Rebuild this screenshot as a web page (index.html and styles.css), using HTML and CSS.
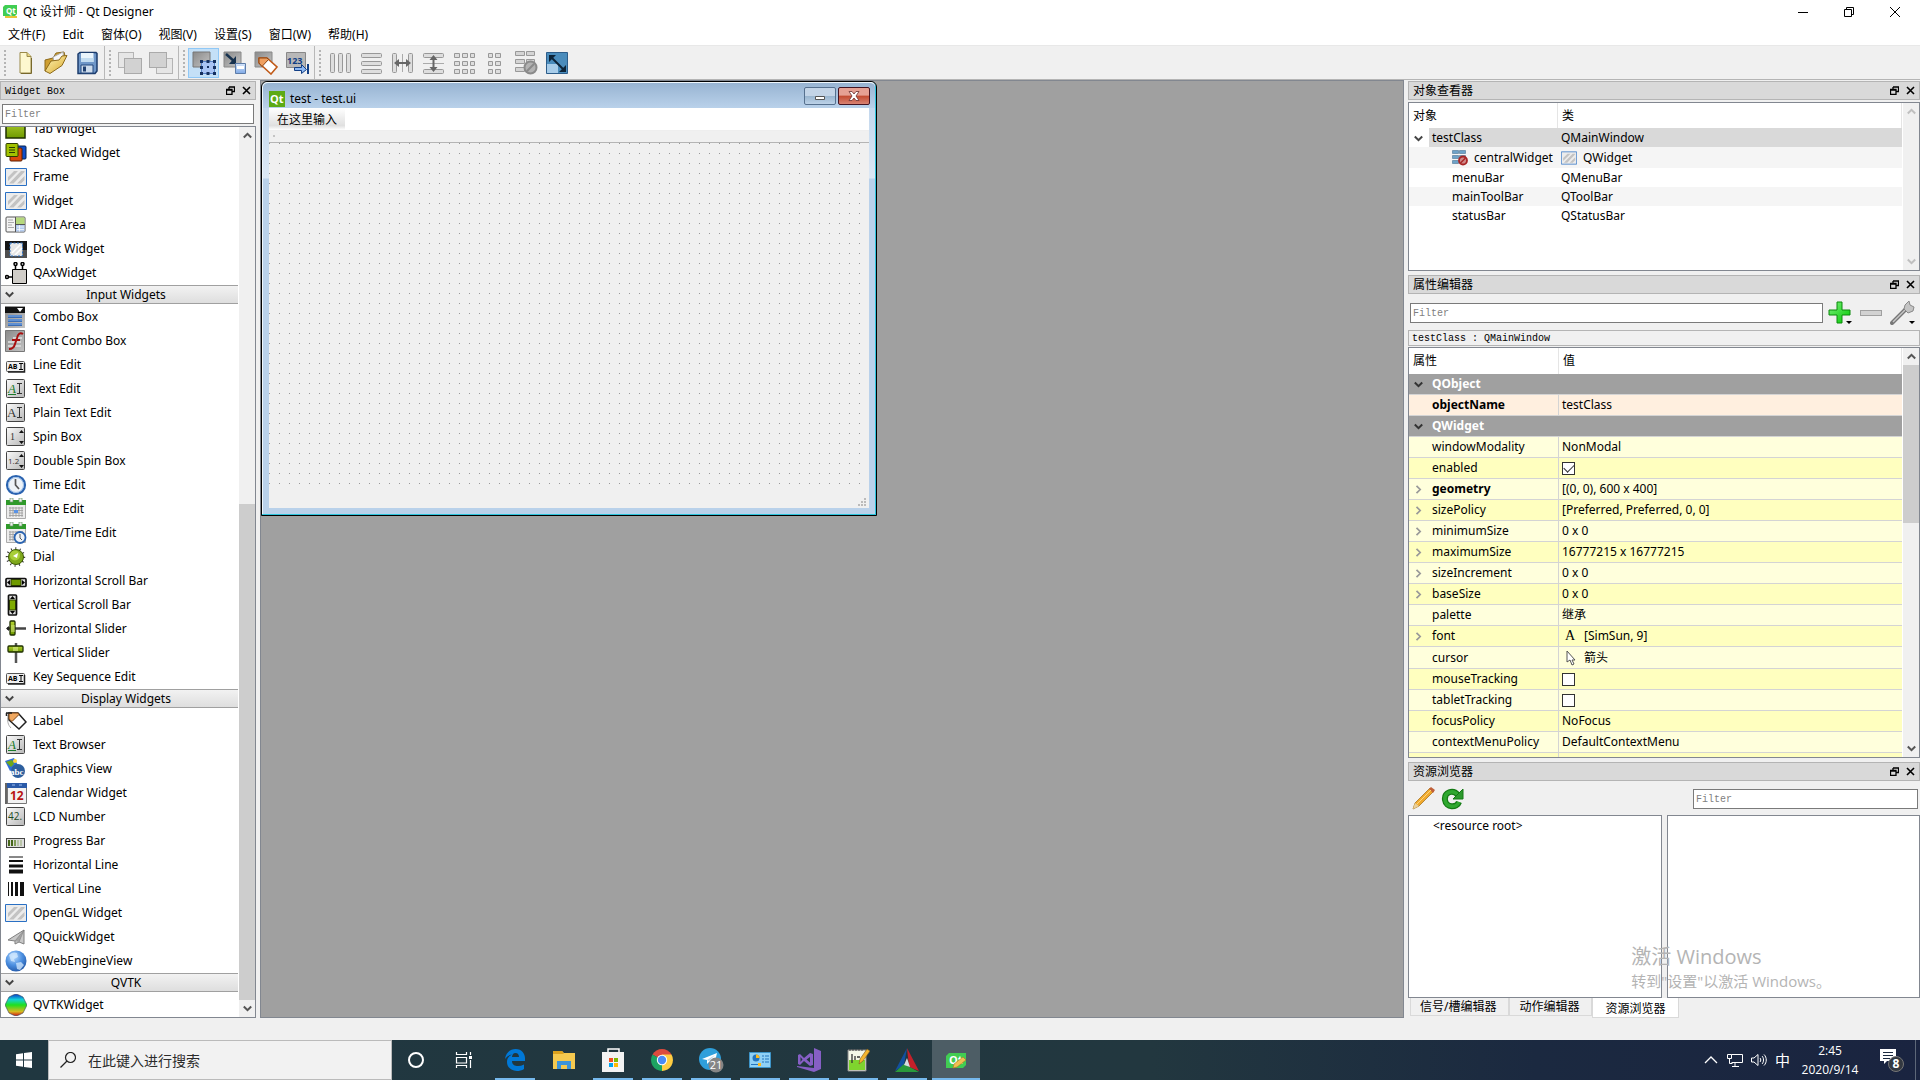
FILE: index.html
```
<!DOCTYPE html>
<html lang="zh-CN">
<head>
    <meta charset="UTF-8">
    <meta name="viewport" content="width=device-width, initial-scale=1.0">
    <title>Qt 设计师 - Qt Designer</title>
    <link rel="stylesheet" href="styles.css">
</head>
<body>

    <!-- Icon sprite -->
    <svg class="sprite" width="0" height="0" aria-hidden="true">
        <defs>
            <linearGradient id="g-grey" x1="0" y1="0" x2="1" y2="1"><stop offset="0" stop-color="#fafafa"/><stop offset="1" stop-color="#b8b8b8"/></linearGradient>
            <linearGradient id="g-dark" x1="0" y1="0" x2="1" y2="1"><stop offset="0" stop-color="#8a8a8a"/><stop offset="1" stop-color="#c4c4c4"/></linearGradient>
            <linearGradient id="g-green" x1="0" y1="0" x2="0" y2="1"><stop offset="0" stop-color="#b5d334"/><stop offset="1" stop-color="#6f9a00"/></linearGradient>
            <linearGradient id="g-blue" x1="0" y1="0" x2="0" y2="1"><stop offset="0" stop-color="#d6e6fb"/><stop offset="1" stop-color="#7fa9e6"/></linearGradient>
            <linearGradient id="g-folder" x1="0" y1="0" x2="1" y2="1"><stop offset="0" stop-color="#fff6b8"/><stop offset="1" stop-color="#d9a82c"/></linearGradient>
            <linearGradient id="g-vtk" x1="0" y1="0" x2="0" y2="1"><stop offset="0" stop-color="#0a35c8"/><stop offset=".25" stop-color="#14d0d8"/><stop offset=".5" stop-color="#1fe01f"/><stop offset=".8" stop-color="#d8b820"/><stop offset="1" stop-color="#d01010"/></linearGradient>
            <radialGradient id="g-globe" cx=".4" cy=".3" r=".8"><stop offset="0" stop-color="#b9dcff"/><stop offset=".5" stop-color="#4c8fe0"/><stop offset="1" stop-color="#1c4f9e"/></radialGradient>
            <linearGradient id="g-plus" x1="0" y1="0" x2="1" y2="1"><stop offset="0" stop-color="#7df07d"/><stop offset="1" stop-color="#00c800"/></linearGradient>
        </defs>

        <symbol id="i-float" viewBox="0 0 9 9"><path d="M3 1h5.500v4.500h-2M3 1v2M3 .8h5.500M.5 3.500h5.500v5h-5.500zM.5 4h5.500" fill="none" stroke="#000" stroke-width="1.300"/></symbol>
        <symbol id="i-x" viewBox="0 0 9 9"><path d="M1 1l7 7M8 1l-7 7" fill="none" stroke="#000" stroke-width="1.600"/></symbol>
        <symbol id="i-down" viewBox="0 0 9 9"><path d="M.8 2.500l3.700 3.700 3.700-3.700" fill="none" stroke="currentColor" stroke-width="2"/></symbol>
        <symbol id="i-up" viewBox="0 0 9 9"><path d="M.8 6.500l3.700-3.700 3.700 3.700" fill="none" stroke="currentColor" stroke-width="2"/></symbol>
        <symbol id="i-right" viewBox="0 0 9 9"><path d="M2.500 .8l3.700 3.700-3.700 3.700" fill="none" stroke="currentColor" stroke-width="1.700"/></symbol>

        <!-- Toolbar icons -->
        <symbol id="i-new" viewBox="0 0 24 24"><path d="M7 1.500h7l4 4v16.500H7z" fill="#fdf8cf" stroke="#9a8a4a"/><path d="M14 1.500v4h4" fill="#e8d680" stroke="#9a8a4a"/><path d="M18.500 7v15.500H8" fill="none" stroke="#77682c"/></symbol>
        <symbol id="i-open" viewBox="0 0 24 24"><path d="M1 20V9l8-2 3-5 8-1 1 4z" fill="#cf9f30" stroke="#8d6a1b"/><path d="M9 6l10-5 1 8-9 7z" fill="#f7f7f7" stroke="#aaa"/><path d="M1 20l6-10 8-1 3-4 5-.5-5 10-12 8z" fill="url(#g-folder)" stroke="#8d6a1b"/></symbol>
        <symbol id="i-save" viewBox="0 0 24 24"><path d="M3 3l2-1.500h16l1 1V20l-2 2.500H3z" fill="#6f97c8" stroke="#1c3c6c" stroke-width="1.500"/><path d="M6 2h12.500v9H6z" fill="#eaf5fc"/><path d="M6 7h12.500v4H6z" fill="#c2dcf0"/><path d="M6 14h12v8H6z" fill="#cddcec" stroke="#24497e"/><path d="M8 15.500h3v5H8z" fill="#204070"/></symbol>
        <symbol id="i-raise" viewBox="0 0 24 24"><rect x=".5" y="1.500" width="15" height="15" fill="#e6e6e6" stroke="#b4b4b4"/><rect x="6.500" y="7.500" width="17" height="15" fill="#d2d2d2" stroke="#aaa"/></symbol>
        <symbol id="i-lower" viewBox="0 0 24 24"><rect x="7.500" y="7.500" width="16" height="15" fill="#e6e6e6" stroke="#b4b4b4"/><rect x=".5" y="1.500" width="17" height="15" fill="#d2d2d2" stroke="#aaa"/></symbol>
        <symbol id="i-edit" viewBox="0 0 24 24"><path d="M1 1h17v15H1z" fill="url(#g-dark)" stroke="#777"/><path d="M9.500 10.500h13v12h-13z" fill="#a9c4f4" stroke="#5b84c8"/><path d="M8 9h3v3H8zM14.500 9h3v3h-3zM21 9h3v3h-3zM8 15h3v3H8zM21 15h3v3h-3zM8 21h3v3H8zM14.500 21h3v3h-3zM21 21h3v3h-3zM15 15h2v2h-2z" fill="#16305f"/></symbol>
        <symbol id="i-signal" viewBox="0 0 24 24"><path d="M1 1h17v15H1z" fill="url(#g-dark)" stroke="#888"/><path d="M3 3l9 8" stroke="#17324f" stroke-width="2.400"/><path d="M13 5v8H6z" fill="#17324f"/><path d="M12.500 12.500h10v10h-10z" fill="url(#g-blue)" stroke="#5d7ca8"/><path d="M14 15h7v3h-7z" fill="#fff"/></symbol>
        <symbol id="i-buddy" viewBox="0 0 24 24"><path d="M1 1h17v15H1z" fill="url(#g-dark)" stroke="#888"/><path d="M5 7l8 0 10 9-6 7L5 12z" fill="#fff" stroke="#c05a18" stroke-width="1.600"/><path d="M5 7h8l1.500 1.500-6.500 7-3-3.500z" fill="#f0a060" stroke="#8c4615"/></symbol>
        <symbol id="i-hlay" viewBox="0 0 24 24"><g fill="#dedede" stroke="#989898"><rect x="2.500" y="2.500" width="4" height="19" rx="1"/><rect x="10.500" y="2.500" width="4" height="19" rx="1"/><rect x="18.500" y="2.500" width="4" height="19" rx="1"/></g></symbol>
        <symbol id="i-vlay" viewBox="0 0 24 24"><g fill="#dedede" stroke="#989898"><rect x="2.500" y="2.500" width="20" height="4" rx="1"/><rect x="2.500" y="10.500" width="20" height="4" rx="1"/><rect x="2.500" y="18.500" width="20" height="4" rx="1"/></g></symbol>
        <symbol id="i-hsplit" viewBox="0 0 24 24"><g fill="#dedede" stroke="#989898"><rect x="2.500" y="2.500" width="4" height="19" rx="1"/><rect x="18.500" y="2.500" width="4" height="19" rx="1"/></g><path d="M12.500 3v18" stroke="#aaa"/><path d="M4 12l5-4v3h7V8l5 4-5 4v-3H9v3z" fill="#666"/></symbol>
        <symbol id="i-vsplit" viewBox="0 0 24 24"><g fill="#dedede" stroke="#989898"><rect x="2.500" y="2.500" width="20" height="4" rx="1"/><rect x="2.500" y="18.500" width="20" height="4" rx="1"/></g><path d="M2 12.500h21" stroke="#aaa"/><path d="M12.500 4l4 5h-3v7h3l-4 5-4-5h3V9h-3z" fill="#666"/></symbol>
        <symbol id="i-grid" viewBox="0 0 24 24"><g fill="#dedede" stroke="#989898"><path d="M2.500 2.500h5v4h-5zM10.500 2.500h5v4h-5zM18.500 2.500h4v4h-4zM2.500 10.500h5v4h-5zM10.500 10.500h5v4h-5zM18.500 10.500h4v4h-4zM2.500 18.500h5v4h-5zM10.500 18.500h5v4h-5zM18.500 18.500h4v4h-4z"/></g></symbol>
        <symbol id="i-form" viewBox="0 0 24 24"><g fill="#dedede" stroke="#989898"><path d="M5.500 2.500h4v4h-4zM12.500 2.500h5v4h-5zM5.500 10.500h4v4h-4zM12.500 10.500h5v4h-5zM5.500 18.500h4v4h-4zM12.500 18.500h5v4h-5z"/></g></symbol>
        <symbol id="i-break" viewBox="0 0 24 24"><g fill="#d4d4d4" stroke="#999"><path d="M1.500 .5h9v4h-9zM12.500 .5h8v4h-8zM1.500 8.500h9v4h-9zM12.500 8.500h8v4h-8zM1.500 16.500h9v4h-9z"/></g><circle cx="16.500" cy="16.500" r="6" fill="#b2b2b2" stroke="#8a8a8a" stroke-width="2"/><path d="M13 20l7-7" stroke="#8a8a8a" stroke-width="2"/></symbol>
        <symbol id="i-adjust" viewBox="0 0 24 24"><path d="M1.500 1.500h21v21h-21z" fill="#4a8cbc" stroke="#2d5d8a"/><path d="M2 13h11v9H2z" fill="#a8cdea"/><path d="M6 6l13 13" stroke="#0d2438" stroke-width="2"/><path d="M4 4h7l-7 7zM21 21h-7l7-7z" fill="#0d2438"/></symbol>

        <!-- Widget icons -->
        <symbol id="w-tab" viewBox="0 0 22 22"><rect x="1" y="1" width="19" height="19" fill="url(#g-green)" stroke="#1f3000" stroke-width="1.500"/></symbol>
        <symbol id="w-stack" viewBox="0 0 22 22"><rect x="9" y="4" width="12" height="13" rx="1" fill="#0d4ecb" stroke="#04204e"/><rect x="5" y="6" width="12" height="13" rx="1" fill="#d94a0d" stroke="#5a1c00"/><rect x="1" y="1.500" width="12" height="13" rx="1" fill="#a2c200" stroke="#2c3c00"/><path d="M4 5.500h6M4 8h6M4 10.500h6" stroke="#2c3c00"/></symbol>
        <symbol id="w-stripe" viewBox="0 0 22 22"><path d="M.5 2.500h21v17H.5z" fill="#ececec" stroke="#2a70c4"/><path d="M3 11l6-6h4L3 15zM4 17.500L16 5h3.500v1L8.500 17.500zM12 17.500l7.500-7.500v4l-3.500 3.500z" fill="#c3c3c3"/></symbol>
        <symbol id="w-mdi" viewBox="0 0 22 22"><rect x="1" y="3" width="19" height="15" rx="1" fill="#f4f4f4" stroke="#555"/><path d="M11 3.500h8.500V10H11z" fill="#b6d97d"/><path d="M11 11h8.500v6.500H11z" fill="#b4ccf0"/><path d="M3 6h5M3 8.500h6M3 11h4M3 13.500h6" stroke="#aaa"/><path d="M12 13h7M12 15.500h7M14.500 11v6.500" stroke="#fff" stroke-width=".7"/><path d="M10.500 3v15M10.500 10.500H20" stroke="#555"/></symbol>
        <symbol id="w-dock" viewBox="0 0 22 22"><path d="M0 3h22v17H0z" fill="#151515"/><path d="M0 12h22v8H0z" fill="#777" opacity=".6"/><path d="M5 5h12.500v13H5z" fill="#e6e6e6" stroke="#2a70c4" stroke-dasharray="2 1.500"/><path d="M7 15l8-8M10 17l7-7" stroke="#fff" stroke-width="1.500"/></symbol>
        <symbol id="w-qax" viewBox="0 0 22 22"><g fill="none" stroke="#000" stroke-width="1.500"><circle cx="10.500" cy="2" r="1.500"/><circle cx="17.500" cy="2" r="1.500"/><circle cx="2" cy="15" r="1.500"/><path d="M10.500 4v4M17.500 4v4M4 15h4"/></g><path d="M7.500 7.500h14v14h-14z" fill="#d0cdc8" stroke="#000"/></symbol>
        <symbol id="w-combo" viewBox="0 0 22 22"><path d="M0 0h20v22H0z" fill="url(#g-dark)"/><path d="M0 1h20v6H0z" fill="#111"/><path d="M12 2h6l-3 4z" fill="#fff"/><path d="M3 10.500h14M3 14.500h14M3 18.500h14" stroke="#3a6cb4" stroke-width="3"/><path d="M3 10h14M3 14h14M3 18h14" stroke="#86b4f0"/></symbol>
        <symbol id="w-fontcombo" viewBox="0 0 22 22"><path d="M.5 .5h19v21H.5z" fill="url(#g-dark)" stroke="#777"/><path d="M8 8h9M3 12h13M3 16h13" stroke="#d4d4d4" stroke-width="2"/><path d="M18 4c-3-2-5 0-6 4l-2 6c-1 4-3 5-6 5M7 10h8" fill="none" stroke="#a80f0f" stroke-width="2"/></symbol>
        <symbol id="w-time" viewBox="0 0 22 22"><circle cx="11" cy="11" r="9" fill="#eef3f8" stroke="#2a63b0" stroke-width="2.200"/><circle cx="11" cy="11" r="7.500" fill="none" stroke="#9dbfe8"/><path d="M10.500 5v6l3.500 4" fill="none" stroke="#555" stroke-width="1.700"/></symbol>
        <symbol id="w-date" viewBox="0 0 22 22"><path d="M1.500 3.500h19v17h-19z" fill="#ececec" stroke="#aaa"/><path d="M1 2h20v5H1z" fill="#2f9a2a"/><path d="M4 10h14M4 12.500h14M4 15h14M4 17.500h14M5 9v10M8 9v10M11 9v10M14 9v10M17 9v10" stroke="#9a9a9a" stroke-width=".8"/><path d="M9 12h4v3H9z" fill="#5a93e6"/><path d="M5 0h3v4H5zM14 0h3v4h-3z" fill="#eee" stroke="#6a9a6a" stroke-width=".7"/></symbol>
        <symbol id="w-datetime" viewBox="0 0 22 22"><use href="#w-date"/><circle cx="15" cy="15.500" r="5.500" fill="#eef3f8" stroke="#2a63b0" stroke-width="1.800"/><path d="M15 12v4l2 2" fill="none" stroke="#555"/></symbol>
        <symbol id="w-dial" viewBox="0 0 22 22"><circle cx="10.500" cy="11" r="8.500" fill="none" stroke="#333" stroke-width="2.400" stroke-dasharray="1 3.400"/><circle cx="11" cy="11" r="7.500" fill="#7fa81c" stroke="#3c5a00"/><circle cx="10" cy="9.500" r="5" fill="#a8ce38"/><path d="M8 10l5-3-1 5z" fill="#fff"/></symbol>
        <symbol id="w-hscroll" viewBox="0 0 22 22"><rect x="1" y="8.500" width="20" height="8" rx="1" fill="#ddd" stroke="#111" stroke-width="1.700"/><path d="M6 9.500h10v6H6z" fill="#6f9a00" stroke="#2c3c00"/><path d="M5 10v5l-3-2.500zM17 10v5l3-2.500z" fill="#000"/></symbol>
        <symbol id="w-vscroll" viewBox="0 0 22 22"><rect x="3.500" y="1" width="8" height="20" rx="1" fill="#ddd" stroke="#111" stroke-width="1.700"/><path d="M4.500 6h6v10h-6z" fill="#7fac00" stroke="#2c3c00"/><path d="M5 5h5L7.500 2zM5 17h5l-2.500 3z" fill="#000"/></symbol>
        <symbol id="w-hslider" viewBox="0 0 22 22"><path d="M2 10.500h19" stroke="#444" stroke-width="2.500"/><rect x="5" y="3" width="5" height="14" rx="1" fill="url(#g-green)" stroke="#1f3000" stroke-width="1.300"/><path d="M7 7v7M9 7v7" stroke="#e6f4a0" stroke-width=".8"/><path d="M4 8v5l-3-2.500z" fill="#222"/></symbol>
        <symbol id="w-vslider" viewBox="0 0 22 22"><path d="M11 1v20" stroke="#555" stroke-width="2.500"/><rect x="3" y="4" width="15" height="6" rx="1" fill="url(#g-green)" stroke="#1f3000" stroke-width="1.300"/><path d="M8 6h5M8 8h5" stroke="#e6f4a0"/></symbol>
        <symbol id="w-label" viewBox="0 0 22 22"><path d="M1 5c3-4 6-3 6 0M3 5c-1 6 0 10 3 13" fill="none" stroke="#aaa"/><path d="M4 3h9l8 9-7 7L4 10z" fill="#fff" stroke="#222" stroke-width="1.500"/><path d="M4 3h9l1 1.500-7 7L4 9z" fill="#f0a860" stroke="#7a4010"/><path d="M1 3h6M1.500 3v3" stroke="#222" stroke-width="1.500"/></symbol>
        <symbol id="w-progress" viewBox="0 0 22 22"><rect x="1.500" y="8.500" width="18" height="9" fill="#ddd" stroke="#444"/><path d="M3 10h2v6H3zM6 10h2v6H6z" fill="#46661a"/><path d="M9 10h2v6H9z" fill="#7f9a58"/><path d="M12 10h2v6h-2zM15 10h2v6h-2z" fill="#b9c4a8"/></symbol>
        <symbol id="w-hline" viewBox="0 0 22 22"><path d="M4 3h14" stroke="#111" stroke-width="1"/><path d="M4 7h14" stroke="#111" stroke-width="2"/><path d="M4 12h14" stroke="#111" stroke-width="3"/><path d="M4 17.500h14" stroke="#111" stroke-width="4"/></symbol>
        <symbol id="w-vline" viewBox="0 0 22 22"><path d="M3.500 4v14" stroke="#111"/><path d="M7 4v14" stroke="#111" stroke-width="2"/><path d="M11.500 4v14" stroke="#111" stroke-width="3"/><path d="M17 4v14" stroke="#111" stroke-width="4"/></symbol>
        <symbol id="w-quick" viewBox="0 0 22 22"><path d="M3 14L19 4v14l-5-2-4 2 0-3z" fill="#c8c8c8" stroke="#808080"/><path d="M10 15l9-11-5 12" fill="#a4a4a4" stroke="#777" stroke-width=".5"/></symbol>
        <symbol id="w-web" viewBox="0 0 22 22"><circle cx="11" cy="11" r="10.500" fill="url(#g-globe)"/><path d="M4 5c3-3 6-3 8-2l1 4-4 2 1 3-4-1zM11 13l5-1 3 3-4 5-3-1z" fill="#d6ebff" opacity=".75"/></symbol>
        <symbol id="w-vtk" viewBox="0 0 22 22"><path d="M8 1l3-1 3 1 4 2 2 4 2 4-2 4-2 4-4 2-3 1-3-1-4-2-2-4-2-4 2-4 2-4z" fill="url(#g-vtk)" stroke="#345" stroke-width=".6"/></symbol>

        <symbol id="i-nolayout" viewBox="0 0 16 16"><path d="M.5 .5h6v3h-6zM7.500 .5h6v3h-6zM.5 5.500h6v3h-6zM7.500 5.500h6v3h-6zM.5 10.500h6v3h-6z" fill="#6ea2c8" stroke="#4a7494" stroke-width=".6"/><circle cx="11" cy="10.500" r="4" fill="#d08a8a" stroke="#a82626" stroke-width="1.800"/><path d="M8.500 13l5-5" stroke="#a82626" stroke-width="1.500"/></symbol>
        <symbol id="i-plus" viewBox="0 0 26 24"><path d="M9 1h5v8h8v5h-8v8H9v-8H1V9h8z" fill="url(#g-plus)" stroke="#0b8a0b"/><path d="M18 20h6l-3 3z" fill="#000"/></symbol>
        <symbol id="i-minus" viewBox="0 0 26 24"><rect x="1.500" y="9.500" width="21" height="5" fill="#d2d2d2" stroke="#a0a0a0"/></symbol>
        <symbol id="i-wrench" viewBox="0 0 26 24"><path d="M2 22L16 8" stroke="#777" stroke-width="4" stroke-linecap="round"/><path d="M3 21L15 9" stroke="#c8c8c8" stroke-width="1.500"/><path d="M14 8l1-4 4-4 1 4 4 2-1 4-5 2z" fill="#c4c4c4" stroke="#888"/><path d="M19 20h6l-3 3z" fill="#000"/></symbol>
        <symbol id="i-pencil" viewBox="0 0 24 24"><path d="M1 22l2-6L18 1l4 3L7 19z" fill="#f0a92c" stroke="#a87320" stroke-width=".8"/><path d="M17 2l2-2 4 3-2 3z" fill="#c0603a"/><path d="M1 22l2-6 4 3z" fill="#e8cf9a"/><path d="M5 17L19 3" stroke="#ffd57a"/></symbol>
        <symbol id="i-reload" viewBox="0 0 24 24"><path d="M18 15c-2 6-13 6-14-2C3 5 12 2 17 8" fill="none" stroke="#147a14" stroke-width="6"/><path d="M18 15c-2 6-13 6-14-2C3 5 12 2 17 8" fill="none" stroke="#2fa82f" stroke-width="3.500"/><path d="M22 2v10H12z" fill="#2c992c" stroke="#147a14"/></symbol>
        <symbol id="i-cursor" viewBox="0 0 16 16"><path d="M5 1v11l3-2 2 5 2-1-2-4h3z" fill="#fff" stroke="#555"/></symbol>

        <!-- Taskbar icons -->
        <symbol id="t-start" viewBox="0 0 16 16"><path d="M0 2.200l7-1v6.300H0zM8 1.100L16 0v7.500H8zM0 8.500h7v6.300l-7-1zM8 8.500h8V16l-8-1.100z" fill="#fff"/></symbol>
        <symbol id="t-search" viewBox="0 0 16 16"><circle cx="10.500" cy="5.500" r="5" fill="none" stroke="#222" stroke-width="1.200"/><path d="M7 9L.5 15.500" stroke="#222" stroke-width="1.300"/></symbol>
        <symbol id="t-cortana" viewBox="0 0 24 24"><circle cx="12" cy="12" r="7" fill="none" stroke="#fff" stroke-width="2"/></symbol>
        <symbol id="t-view" viewBox="0 0 24 24"><path d="M4.500 4v2.500h10V4M4.500 20v-2.500h10V20M4.500 9.500h10v5.500h-10zM18.500 4v3M18.500 12v8" fill="none" stroke="#fff" stroke-width="1.200"/><path d="M17 8h3v3h-3z" fill="#fff"/></symbol>
        <symbol id="t-edge" viewBox="0 0 24 24"><path d="M2 11C3 4 8 1 12.500 1 19 1 22 6 22 10v3H9c0 4 3 5 6 5 2 0 4-.5 6-1.500v4.500c-2 1.500-5 2-7 2-6 0-10-4-10-9 0-4 2-6 5-7.500C6 7 4 8.500 2 11zM9 9h7c0-2-1-4-3.500-4S9.300 7 9 9z" fill="#0078d7"/></symbol>
        <symbol id="t-explorer" viewBox="0 0 24 24"><path d="M1 3h9l2 2h11v16H1z" fill="#f5c94f"/><path d="M1 3h9l2 3H1z" fill="#dca11d"/><path d="M5 21v-8h14v8h-4v-4H9v4z" fill="#3d94d9"/></symbol>
        <symbol id="t-store" viewBox="0 0 24 24"><path d="M7 5V1h11v4" fill="none" stroke="#fff" stroke-width="1.500"/><path d="M1 4h22v20H1z" fill="#f3f3f3"/><path d="M8 10h4v4H8z" fill="#f25022"/><path d="M13 10h4v4h-4z" fill="#7fba00"/><path d="M8 15h4v4H8z" fill="#00a4ef"/><path d="M13 15h4v4h-4z" fill="#ffb900"/></symbol>
        <symbol id="t-chrome" viewBox="0 0 24 24"><path d="M12 12L2.500 6.500a11 11 0 0 1 19 0z" fill="#dd4b3e"/><path d="M12 12L2.500 6.500A11 11 0 0 0 12 23l4.500-8.500z" fill="#1da362"/><path d="M12 12v11a11 11 0 0 0 9.500-16.500H12z" fill="#ffcd42"/><circle cx="12" cy="12" r="5.200" fill="#fff"/><circle cx="12" cy="12" r="4.200" fill="#4c8bf5"/></symbol>
        <symbol id="t-panel" viewBox="0 0 24 24"><path d="M1.500 4.500h21v15h-21z" fill="#8fd0f5" stroke="#3d94c9"/><circle cx="8" cy="10" r="3.500" fill="#2374bd"/><path d="M8 10V6.500A3.500 3.500 0 0 1 11.500 10z" fill="#ffb81a"/><path d="M14 8h2m1 0h4M14 11h2m1 0h4M14 14h2m1 0h4M3 16.500h7" stroke="#2374bd"/><path d="M10 15h3v3h-3z" fill="#ffb81a"/></symbol>
        <symbol id="t-vs" viewBox="0 0 24 24"><path d="M17 0l7 3v18l-7 3-17-5v-1l17 2z" fill="#865fc5"/><path d="M1 7l2-1 4 4 6-5 3 1v11l-3 1-6-5-4 4-2-1zM3.500 9v5l2-2.500zM9.500 11.500l3.500 3V9z" fill="#865fc5" fill-rule="evenodd"/></symbol>
        <symbol id="t-npp" viewBox="0 0 24 24"><path d="M2 2h18v21H2z" fill="#f4f8e8" stroke="#888"/><path d="M3 12h16v10H3z" fill="#7fd42e"/><path d="M4 1v2m3-2v2m3-2v2m3-2v2m3-2v2" stroke="#444"/><path d="M6 6v9M9 8v4M11 9h3" stroke="#333" stroke-width="1.300"/><path d="M13 16l1-5 7-10 3 2-7 10z" fill="#f4b52e" stroke="#7a5a20" stroke-width=".6"/></symbol>
        <symbol id="t-cmake" viewBox="0 0 24 24"><path d="M12 0L0 23l9-6z" fill="#1250a0"/><path d="M12 0l12 23-10-4z" fill="#c4202a"/><path d="M0 24l9-8 15 8z" fill="#2a9a3c"/><path d="M12 10l-3 7 6 2z" fill="#d8dce0"/></symbol>
    </svg>

    <!-- Title bar -->
    <header class="titlebar">
        <svg class="app-icon" viewBox="0 0 14 14"><path d="M2 0h12v9l-2 2H0V2z" fill="#41cd52"/><text x="3" y="9" class="t-ico" font-size="8" font-weight="bold" fill="#fff">Qt</text><path d="M2 11h12v2H2z" fill="#e8c437"/></svg>
        <h1>Qt 设计师 - Qt Designer</h1>
        <div class="window-buttons">
            <button aria-label="最小化"><svg viewBox="0 0 12 12"><path d="M1 6.500h10" stroke="#000"/></svg></button>
            <button aria-label="还原"><svg viewBox="0 0 12 12"><path d="M1.500 3.500h7v7h-7zM3.500 3.500v-2h7v7h-2" fill="none" stroke="#000"/></svg></button>
            <button aria-label="关闭"><svg viewBox="0 0 12 12"><path d="M1 1l10 10M11 1L1 11" stroke="#000"/></svg></button>
        </div>
    </header>

    <nav class="menubar">
        <button>文件(F)</button>
        <button>Edit</button>
        <button>窗体(O)</button>
        <button>视图(V)</button>
        <button>设置(S)</button>
        <button>窗口(W)</button>
        <button>帮助(H)</button>
    </nav>

    <div class="toolbar">
        <div class="tool-group">
            <button aria-label="New"><svg><use href="#i-new"/></svg></button>
            <button aria-label="Open"><svg><use href="#i-open"/></svg></button>
            <button aria-label="Save"><svg><use href="#i-save"/></svg></button>
        </div>
        <div class="tool-group">
            <button aria-label="Raise"><svg><use href="#i-raise"/></svg></button>
            <button aria-label="Lower"><svg><use href="#i-lower"/></svg></button>
        </div>
        <div class="tool-group">
            <button class="active" aria-label="Edit Widgets"><svg><use href="#i-edit"/></svg></button>
            <button aria-label="Edit Signals/Slots"><svg><use href="#i-signal"/></svg></button>
            <button aria-label="Edit Buddies"><svg><use href="#i-buddy"/></svg></button>
            <button aria-label="Edit Tab Order"><svg viewBox="0 0 24 24"><path d="M1.500 1.500h19v15h-19z" fill="#b8b8b8" stroke="#888"/><text x="2" y="13" class="t-ico" font-size="9" font-weight="bold" fill="#123f85">123</text><path d="M9.500 16.500h7v-3l5 5-5 4v-3h-7z" fill="#8db8f3" stroke="#123f85"/><path d="M23 13v10" stroke="#123f85" stroke-width="2"/></svg></button>
        </div>
        <div class="tool-group">
            <button aria-label="Lay Out Horizontally"><svg><use href="#i-hlay"/></svg></button>
            <button aria-label="Lay Out Vertically"><svg><use href="#i-vlay"/></svg></button>
            <button aria-label="Horizontal Splitter"><svg><use href="#i-hsplit"/></svg></button>
            <button aria-label="Vertical Splitter"><svg><use href="#i-vsplit"/></svg></button>
            <button aria-label="Grid"><svg><use href="#i-grid"/></svg></button>
            <button aria-label="Form Layout"><svg><use href="#i-form"/></svg></button>
            <button aria-label="Break Layout"><svg><use href="#i-break"/></svg></button>
            <button aria-label="Adjust Size"><svg><use href="#i-adjust"/></svg></button>
        </div>
    </div>

    <main class="workspace">

        <!-- Widget Box -->
        <aside class="widget-box">
            <div class="dock-title">
                <h2 class="mono">Widget Box</h2>
                <button aria-label="Float"><svg><use href="#i-float"/></svg></button>
                <button aria-label="Close"><svg><use href="#i-x"/></svg></button>
            </div>
            <input class="filter" type="text" placeholder="Filter" aria-label="Filter widgets">
            <div class="widget-frame">
                <div class="widget-list">
                    <ul>
                        <li><svg><use href="#w-tab"/></svg>Tab Widget</li>
                        <li><svg><use href="#w-stack"/></svg>Stacked Widget</li>
                        <li><svg><use href="#w-stripe"/></svg>Frame</li>
                        <li><svg><use href="#w-stripe"/></svg>Widget</li>
                        <li><svg><use href="#w-mdi"/></svg>MDI Area</li>
                        <li><svg><use href="#w-dock"/></svg>Dock Widget</li>
                        <li><svg><use href="#w-qax"/></svg>QAxWidget</li>
                    </ul>
                    <button class="category"><svg><use href="#i-down"/></svg><span>Input Widgets</span></button>
                    <ul>
                        <li><svg><use href="#w-combo"/></svg>Combo Box</li>
                        <li><svg><use href="#w-fontcombo"/></svg>Font Combo Box</li>
                        <li><svg viewBox="0 0 22 22"><rect x="1.500" y="7.500" width="18" height="10" rx="1" fill="#f0f0f0" stroke="#555"/><path d="M19.500 9v9H3" fill="none" stroke="#222" stroke-width="1.500"/><text x="3" y="15" class="t-ico" font-size="7" font-weight="bold">AB</text><path d="M14 9.500h4M16 10v5M14 15.500h4" stroke="#000"/></svg>Line Edit</li>
                        <li><svg viewBox="0 0 22 22"><rect x="1.500" y="1.500" width="18" height="18" rx="1" fill="url(#g-grey)" stroke="#444"/><text x="3" y="15" class="t-serif" font-size="13" font-style="italic" fill="#1a7a2a">A</text><path d="M3 16.500h8" stroke="#1a7a2a"/><path d="M12 5.500h5M14.500 5v10M12 15.500h5" fill="none" stroke="#333"/></svg>Text Edit</li>
                        <li><svg viewBox="0 0 22 22"><rect x="1.500" y="1.500" width="18" height="18" rx="1" fill="url(#g-grey)" stroke="#444"/><text x="2" y="15" class="t-serif" font-size="13" fill="#333">A</text><path d="M12 5.500h5M14.500 5v10M12 15.500h5" fill="none" stroke="#333"/></svg>Plain Text Edit</li>
                        <li><svg viewBox="0 0 22 22"><rect x="1.500" y="1.500" width="18" height="18" rx="1" fill="url(#g-grey)" stroke="#444"/><text x="5" y="14" class="t-serif" font-size="10" fill="#333">1</text><path d="M14 7h5l-2.500-3zM14 15h5l-2.500 3z" fill="#111"/></svg>Spin Box</li>
                        <li><svg viewBox="0 0 22 22"><rect x="1.500" y="1.500" width="18" height="18" rx="1" fill="url(#g-grey)" stroke="#444"/><text x="3" y="14" class="t-ico" font-size="8" fill="#333">1.2</text><path d="M14 7h5l-2.500-3zM14 15h5l-2.500 3z" fill="#111"/></svg>Double Spin Box</li>
                        <li><svg><use href="#w-time"/></svg>Time Edit</li>
                        <li><svg><use href="#w-date"/></svg>Date Edit</li>
                        <li><svg><use href="#w-datetime"/></svg>Date/Time Edit</li>
                        <li><svg><use href="#w-dial"/></svg>Dial</li>
                        <li><svg><use href="#w-hscroll"/></svg>Horizontal Scroll Bar</li>
                        <li><svg><use href="#w-vscroll"/></svg>Vertical Scroll Bar</li>
                        <li><svg><use href="#w-hslider"/></svg>Horizontal Slider</li>
                        <li><svg><use href="#w-vslider"/></svg>Vertical Slider</li>
                        <li><svg viewBox="0 0 22 22"><rect x="1.500" y="7.500" width="18" height="10" rx="1" fill="#f0f0f0" stroke="#555"/><path d="M19.500 9v9H3" fill="none" stroke="#222" stroke-width="1.500"/><text x="3" y="15" class="t-ico" font-size="7" font-weight="bold">AB</text><path d="M14 9.500h4M16 10v5M14 15.500h4" stroke="#000"/></svg>Key Sequence Edit</li>
                    </ul>
                    <button class="category"><svg><use href="#i-down"/></svg><span>Display Widgets</span></button>
                    <ul>
                        <li><svg><use href="#w-label"/></svg>Label</li>
                        <li><svg viewBox="0 0 22 22"><rect x="1.500" y="1.500" width="18" height="18" rx="1" fill="url(#g-grey)" stroke="#444"/><text x="3" y="15" class="t-serif" font-size="13" font-style="italic" fill="#1a7a2a">A</text><path d="M3 16.500h8" stroke="#1a7a2a"/><path d="M12 5.500h5M14.500 5v10M12 15.500h5" fill="none" stroke="#333"/></svg>Text Browser</li>
                        <li><svg viewBox="0 0 22 22"><path d="M0 3l9-3 5 9-9 4z" fill="#2f6fd8"/><path d="M1 4l6-2 2 4-3 3z" fill="#6ea818"/><circle cx="10" cy="3" r="2" fill="#ffd93a"/><circle cx="13" cy="13" r="7" fill="#2d5f9e"/><text x="5" y="17" class="t-serif" font-size="9" font-weight="bold" fill="#fff">abc</text></svg>Graphics View</li>
                        <li><svg viewBox="0 0 22 22"><path d="M0 1h3v21H0z" fill="#666"/><path d="M2.500 1.500h19v20h-19z" fill="#f2f2f2" stroke="#777"/><path d="M2 1h20v5H2z" fill="#2a5aa8"/><path d="M7 3h3M14 3h3" stroke="#9bbcf0"/><text x="5" y="18" class="t-ico" font-size="12" font-weight="bold" fill="#b81414">12</text></svg>Calendar Widget</li>
                        <li><svg viewBox="0 0 22 22"><rect x="1.500" y="1.500" width="18" height="18" rx="1" fill="url(#g-grey)" stroke="#444"/><text x="3" y="14" class="t-ico" font-size="10" fill="#1e4a24">42.</text></svg>LCD Number</li>
                        <li><svg><use href="#w-progress"/></svg>Progress Bar</li>
                        <li><svg><use href="#w-hline"/></svg>Horizontal Line</li>
                        <li><svg><use href="#w-vline"/></svg>Vertical Line</li>
                        <li><svg><use href="#w-stripe"/></svg>OpenGL Widget</li>
                        <li><svg><use href="#w-quick"/></svg>QQuickWidget</li>
                        <li><svg><use href="#w-web"/></svg>QWebEngineView</li>
                    </ul>
                    <button class="category"><svg><use href="#i-down"/></svg><span>QVTK</span></button>
                    <ul>
                        <li><svg><use href="#w-vtk"/></svg>QVTKWidget</li>
                    </ul>
                </div>
                <div class="scrollbar at-end">
                    <button aria-label="Scroll up"><svg><use href="#i-up"/></svg></button>
                    <div class="track"><div class="thumb"></div></div>
                    <button aria-label="Scroll down"><svg><use href="#i-down"/></svg></button>
                </div>
            </div>
        </aside>

        <!-- Form editor -->
        <section class="mdi-area">
            <div class="form-window">
                <div class="form-title">
                    <svg class="qt-logo" viewBox="0 0 16 16"><path d="M0 0h16v16H0z" fill="#5caa15"/><text x="1" y="12" class="t-ico" font-size="11" font-weight="bold" fill="#fff">Qt</text></svg>
                    <span>test - test.ui</span>
                    <button class="form-min" aria-label="Minimize"><svg viewBox="0 0 12 10"><path d="M1.500 5.500h9v3h-9z" fill="#fff" stroke="#555"/></svg></button>
                    <button class="form-close" aria-label="Close form"><svg viewBox="0 0 12 10"><path d="M1 .5h3l2 2.500L8 .5h3L8 5l3 4.500H8L6 7 4 9.500H1L4 5z" fill="#fff" stroke="#6a3030" stroke-width=".8"/></svg></button>
                </div>
                <div class="form-body">
                    <div class="form-menu"><button>在这里输入</button></div>
                    <div class="form-toolbar"></div>
                    <div class="form-canvas"></div>
                    <div class="form-status"><svg viewBox="0 0 8 8"><path d="M6 0h2v2H6zM3 3h2v2H3zM6 3h2v2H6zM0 6h2v2H0zM3 6h2v2H3zM6 6h2v2H6z" fill="#bbb"/></svg></div>
                </div>
            </div>
        </section>

        <aside class="right-docks">

            <!-- Object inspector -->
            <section class="dock inspector">
                <div class="dock-title">
                    <h2>对象查看器</h2>
                    <button aria-label="Float"><svg><use href="#i-float"/></svg></button>
                    <button aria-label="Close"><svg><use href="#i-x"/></svg></button>
                </div>
                <div class="table-frame">
                    <div class="table-view">
                        <table class="tree">
                            <thead>
                                <tr><th>对象</th><th>类</th></tr>
                            </thead>
                            <tbody>
                                <tr class="selected"><td class="root"><svg class="arrow"><use href="#i-down"/></svg>testClass</td><td>QMainWindow</td></tr>
                                <tr class="tall alt"><td class="child"><svg class="ico16"><use href="#i-nolayout"/></svg>centralWidget</td><td><svg class="ico16"><use href="#w-stripe"/></svg>QWidget</td></tr>
                                <tr><td class="child">menuBar</td><td>QMenuBar</td></tr>
                                <tr class="alt"><td class="child">mainToolBar</td><td>QToolBar</td></tr>
                                <tr><td class="child">statusBar</td><td>QStatusBar</td></tr>
                            </tbody>
                        </table>
                    </div>
                    <div class="scrollbar disabled">
                        <button aria-label="Scroll up"><svg><use href="#i-up"/></svg></button>
                        <div class="track"></div>
                        <button aria-label="Scroll down"><svg><use href="#i-down"/></svg></button>
                    </div>
                </div>
            </section>

            <!-- Property editor -->
            <section class="dock properties">
                <div class="dock-title">
                    <h2>属性编辑器</h2>
                    <button aria-label="Float"><svg><use href="#i-float"/></svg></button>
                    <button aria-label="Close"><svg><use href="#i-x"/></svg></button>
                </div>
                <div class="property-tools">
                    <input class="filter" type="text" placeholder="Filter" aria-label="Filter properties">
                    <button aria-label="Add property"><svg><use href="#i-plus"/></svg></button>
                    <button aria-label="Remove property"><svg><use href="#i-minus"/></svg></button>
                    <button aria-label="Configure"><svg><use href="#i-wrench"/></svg></button>
                </div>
                <div class="class-name">testClass : QMainWindow</div>
                <div class="table-frame">
                    <div class="table-view">
                        <table class="props">
                            <thead>
                                <tr><th>属性</th><th>值</th></tr>
                            </thead>
                            <tbody>
                                <tr class="group"><td colspan="2"><svg class="arrow"><use href="#i-down"/></svg>QObject</td></tr>
                                <tr class="peach changed"><td>objectName</td><td>testClass</td></tr>
                                <tr class="group"><td colspan="2"><svg class="arrow"><use href="#i-down"/></svg>QWidget</td></tr>
                                <tr class="light"><td>windowModality</td><td>NonModal</td></tr>
                                <tr class="deep"><td><label for="enabled">enabled</label></td><td><input type="checkbox" id="enabled" checked></td></tr>
                                <tr class="light changed"><td><svg class="arrow"><use href="#i-right"/></svg>geometry</td><td>[(0, 0), 600 x 400]</td></tr>
                                <tr class="deep"><td><svg class="arrow"><use href="#i-right"/></svg>sizePolicy</td><td>[Preferred, Preferred, 0, 0]</td></tr>
                                <tr class="light"><td><svg class="arrow"><use href="#i-right"/></svg>minimumSize</td><td>0 x 0</td></tr>
                                <tr class="deep"><td><svg class="arrow"><use href="#i-right"/></svg>maximumSize</td><td>16777215 x 16777215</td></tr>
                                <tr class="light"><td><svg class="arrow"><use href="#i-right"/></svg>sizeIncrement</td><td>0 x 0</td></tr>
                                <tr class="deep"><td><svg class="arrow"><use href="#i-right"/></svg>baseSize</td><td>0 x 0</td></tr>
                                <tr class="light"><td>palette</td><td>继承</td></tr>
                                <tr class="deep"><td><svg class="arrow"><use href="#i-right"/></svg>font</td><td><span class="font-sample">A</span>[SimSun, 9]</td></tr>
                                <tr class="light tall"><td>cursor</td><td><svg class="ico16"><use href="#i-cursor"/></svg>箭头</td></tr>
                                <tr class="deep"><td><label for="mouseTracking">mouseTracking</label></td><td><input type="checkbox" id="mouseTracking"></td></tr>
                                <tr class="light"><td><label for="tabletTracking">tabletTracking</label></td><td><input type="checkbox" id="tabletTracking"></td></tr>
                                <tr class="deep"><td>focusPolicy</td><td>NoFocus</td></tr>
                                <tr class="light"><td>contextMenuPolicy</td><td>DefaultContextMenu</td></tr>
                                <tr class="deep"><td></td><td></td></tr>
                            </tbody>
                        </table>
                    </div>
                    <div class="scrollbar">
                        <button aria-label="Scroll up"><svg><use href="#i-up"/></svg></button>
                        <div class="track"><div class="thumb"></div></div>
                        <button aria-label="Scroll down"><svg><use href="#i-down"/></svg></button>
                    </div>
                </div>
            </section>

            <!-- Resource browser -->
            <section class="dock resources">
                <div class="dock-title">
                    <h2>资源浏览器</h2>
                    <button aria-label="Float"><svg><use href="#i-float"/></svg></button>
                    <button aria-label="Close"><svg><use href="#i-x"/></svg></button>
                </div>
                <div class="resource-tools">
                    <button aria-label="Edit resources"><svg><use href="#i-pencil"/></svg></button>
                    <button aria-label="Reload"><svg><use href="#i-reload"/></svg></button>
                    <input class="filter" type="text" placeholder="Filter" aria-label="Filter resources">
                </div>
                <div class="resource-panes">
                    <div class="pane">&lt;resource root&gt;</div>
                    <div class="pane"></div>
                </div>
                <div class="dock-tabs">
                    <button>信号/槽编辑器</button>
                    <button>动作编辑器</button>
                    <button class="current">资源浏览器</button>
                </div>
                <div class="watermark">
                    <p class="big">激活 Windows</p>
                    <p>转到"设置"以激活 Windows。</p>
                </div>
            </section>
        </aside>
    </main>

    <!-- Windows taskbar -->
    <footer class="taskbar">
        <button class="task" aria-label="开始"><svg class="start"><use href="#t-start"/></svg></button>
        <label class="search"><svg><use href="#t-search"/></svg><input type="text" placeholder="在此键入进行搜索" aria-label="搜索"></label>
        <button class="task" aria-label="Cortana"><svg><use href="#t-cortana"/></svg></button>
        <button class="task" aria-label="任务视图"><svg><use href="#t-view"/></svg></button>
        <div class="apps">
            <button class="task open" aria-label="Edge"><svg><use href="#t-edge"/></svg></button>
            <button class="task" aria-label="文件资源管理器"><svg><use href="#t-explorer"/></svg></button>
            <button class="task open" aria-label="Store"><svg><use href="#t-store"/></svg></button>
            <button class="task open" aria-label="Chrome"><svg><use href="#t-chrome"/></svg></button>
            <button class="task open" aria-label="Telegram"><svg class="badged" viewBox="0 0 26 26"><circle cx="12" cy="12" r="11" fill="#2f9fdb"/><path d="M4 12l15-6-3 13-5-4-2 2v-4z" fill="#fff"/><path d="M9 13l8-5-6 6z" fill="#b8d6ea"/><circle cx="18" cy="18" r="7.500" fill="#858585"/><text x="18" y="22" class="t-ico" text-anchor="middle" font-size="11" fill="#fff">21</text></svg></button>
            <button class="task open" aria-label="控制面板"><svg><use href="#t-panel"/></svg></button>
            <button class="task open" aria-label="Visual Studio"><svg><use href="#t-vs"/></svg></button>
            <button class="task open" aria-label="Notepad++"><svg><use href="#t-npp"/></svg></button>
            <button class="task open" aria-label="CMake"><svg><use href="#t-cmake"/></svg></button>
            <button class="task current" aria-label="Qt Designer"><svg viewBox="0 0 24 24"><path d="M5 5h17v12l-3 3H2V8z" fill="#41cd52"/><text x="5" y="16" class="t-ico" font-size="11" font-weight="bold" fill="#fff">Qt</text><path d="M9 20l1-4L19 9l3 3-9 7z" fill="#f0c050" stroke="#b07020" stroke-width=".6"/></svg></button>
        </div>
        <div class="tray">
            <svg viewBox="0 0 16 16"><path d="M2 11l6-6 6 6" fill="none" stroke="#fff" stroke-width="1.300"/></svg>
            <svg viewBox="0 0 16 16"><path d="M4.500 2.500h11v8h-11M8 10.500v3.500M5 14.500h7M.5 2.500h4v4h-4zM2.500 6.500v5h3" fill="none" stroke="#fff"/></svg>
            <svg viewBox="0 0 16 16"><path d="M.5 6h2.500l4-3.500v11L3 10H.5zM9 6c1 1 1 3 0 4M11 4c2 2 2 6 0 8M13 2.500c3 3 3 8 0 11" fill="none" stroke="#fff"/></svg>
            <span class="ime">中</span>
            <div class="clock"><span>2:45</span><span>2020/9/14</span></div>
            <button class="notify" aria-label="通知"><svg viewBox="0 0 26 26"><path d="M1 2h16v12H8l-3 3v-3H1z" fill="#fff"/><path d="M4 5.500h10M4 8.500h10M4 11.500h7" stroke="#1b2940"/><circle cx="17" cy="17" r="7.500" fill="#333840" stroke="#777"/><text x="17" y="21" class="t-ico" text-anchor="middle" font-size="12" font-weight="bold" fill="#fff">8</text></svg></button>
        </div>
    </footer>

</body>
</html>
```
FILE: styles.css
```
* {
    box-sizing: border-box;
}
body {
    margin: 0;
    height: 100vh;
    display: flex;
    flex-direction: column;
    overflow: hidden;
    background-color: #f0f0f0;
    color: #000;
    font-family: "Noto Sans", "Noto Sans CJK SC", sans-serif;
    font-size: 12px;
    line-height: 16px;
}
h1, h2, p, ul {
    margin: 0;
    padding: 0;
    font-size: 12px;
    font-weight: normal;
}
ul {
    list-style: none;
}
button {
    margin: 0;
    padding: 0;
    border: none;
    background: none;
    color: inherit;
    font: inherit;
    display: flex;
    align-items: center;
    justify-content: center;
}
svg {
    flex: none;
    display: block;
}
.sprite {
    position: absolute;
}
.t-ico {
    font-family: "Open Sans", sans-serif;
}
.t-serif {
    font-family: "Liberation Serif", serif;
}

/* Title bar and menu */
.titlebar {
    display: flex;
    align-items: center;
    height: 24px;
    padding: 0 2px 0 3px;
    gap: 6px;
    background-color: #fff;
}
.titlebar h1 {
    flex: 1;
}
.app-icon {
    width: 14px;
    height: 14px;
}
.window-buttons {
    display: flex;
}
.window-buttons button {
    width: 46px;
    height: 20px;
}
.window-buttons svg {
    width: 12px;
    height: 12px;
}
.menubar {
    display: flex;
    gap: 1px;
    height: 22px;
    background-color: #fff;
    border-bottom: 1px solid #e8e8e8;
}
.menubar button {
    padding: 0 8px;
}

/* Toolbar */
.toolbar {
    display: flex;
    height: 34px;
    border-bottom: 1px solid #b4b4b4;
}
.tool-group {
    display: flex;
    align-items: center;
    padding-right: 2px;
    border-right: 1px solid #b8b8b8;
}
.tool-group:last-child {
    border-right: none;
}
.tool-group::before {
    content: "";
    width: 2px;
    height: 26px;
    margin: 0 3px 0 4px;
    background: repeating-linear-gradient(#b4b4b4 0 2px, transparent 2px 4px);
}
.tool-group button {
    width: 31px;
    height: 30px;
}
.tool-group button.active {
    background-color: #c4e0f7;
    border: 1px solid #90c8f6;
}
.tool-group svg {
    width: 24px;
    height: 24px;
}

/* Docks */
.workspace {
    flex: 1;
    min-height: 0;
    display: grid;
    grid-template-columns: 256px 1fr 512px;
    column-gap: 4px;
    padding-bottom: 22px;
}
.dock-title {
    flex: none;
    display: flex;
    align-items: center;
    gap: 7px;
    height: 19px;
    padding: 0 4px;
    background-color: #d9d9d9;
    border: 1px solid #b4b4b4;
}
.dock-title h2 {
    flex: 1;
    padding-top: 1px;
}
.dock-title .mono {
    padding-top: 2px;
    font-family: "Liberation Mono", monospace;
    font-size: 10px;
}
.dock-title button, .dock-title svg {
    width: 9px;
    height: 9px;
}
.filter {
    min-width: 0;
    height: 20px;
    padding: 0 2px;
    border: 1px solid #7a7a7a;
    background-color: #fff;
    font-family: "Liberation Mono", monospace;
    font-size: 10px;
}
.filter::placeholder {
    color: #7f7f7f;
}
.scrollbar {
    display: flex;
    flex-direction: column;
    width: 16px;
    background-color: #f0f0f0;
    color: #555;
}
.scrollbar.disabled {
    color: #bfbfbf;
}
.scrollbar button {
    width: 16px;
    height: 17px;
}
.scrollbar svg {
    width: 9px;
    height: 9px;
}
.track {
    flex: 1;
    display: flex;
    flex-direction: column;
}
.thumb {
    height: 42%;
    background-color: #cdcdcd;
}
.at-end .track {
    justify-content: flex-end;
}
.at-end .thumb {
    height: 58%;
}

/* Widget box */
.widget-box {
    display: flex;
    flex-direction: column;
    min-height: 0;
    padding-top: 1px;
}
.widget-box .filter {
    flex: none;
    margin: 4px 2px 2px;
}
.widget-frame {
    flex: 1;
    min-height: 0;
    display: flex;
    background-color: #fff;
    border: 1px solid #828790;
}
.widget-list {
    flex: 1;
    display: flex;
    flex-direction: column;
    justify-content: flex-end;
    overflow: hidden;
}
.widget-list li {
    display: flex;
    align-items: center;
    gap: 6px;
    height: 24px;
    padding-left: 4px;
}
.widget-list li svg {
    width: 22px;
    height: 22px;
}
.category {
    flex: none;
    height: 19px;
    margin: 0 1px 1px 0;
    padding: 0 4px;
    background-image: linear-gradient(#f2f2f2, #dedede);
    border-top: 1px solid #a0a0a0;
    border-bottom: 1px solid #a0a0a0;
}
.category svg {
    width: 9px;
    height: 9px;
    color: #444;
}
.category span {
    flex: 1;
    padding-left: 4px;
}

/* Form editor */
.mdi-area {
    background-color: #a0a0a0;
    border: 1px solid #828790;
    overflow: hidden;
}
.form-window {
    width: 616px;
    padding: 0 6px 7px;
    background: linear-gradient(#b9d1ea, #dce8f5 96px, #b9d1ea 97px);
    border: 1px solid #000;
    border-radius: 6px 6px 0 0;
    box-shadow: inset -1px -1px #2cc4dc, inset 1px 1px #eef6fc;
}
.form-title {
    display: flex;
    align-items: center;
    gap: 2px;
    height: 26px;
    margin: 0 -5px;
    padding: 0 5px 0 6px;
    background-image: linear-gradient(#98b4d2, #b9d1ea);
    border-top: 1px solid #eef6fc;
    border-radius: 5px 5px 0 0;
}
.form-title span {
    flex: 1;
    padding: 6px 0 0 3px;
}
.qt-logo {
    width: 16px;
    height: 16px;
    margin-top: 6px;
}
.form-title button {
    width: 32px;
    height: 18px;
    border: 1px solid #56708e;
    border-radius: 2px;
    background-image: linear-gradient(#c3d4e7 48%, #98b4ce 50%, #bcd2e8);
}
.form-title .form-close {
    border-color: #431422;
    background-image: linear-gradient(#e5a093 45%, #c24a30 50%, #d88272);
}
.form-title button svg {
    width: 12px;
    height: 10px;
}
.form-body {
    display: flex;
    flex-direction: column;
    height: 400px;
    margin: 0 1px;
    background-color: #f0f0f0;
}
.form-menu {
    display: flex;
    height: 23px;
    background-color: #fff;
    border-bottom: 1px solid #eee;
}
.form-menu button {
    padding: 2px 8px 0;
    background-image: linear-gradient(#fff, #e0e0e0 80%, #fff);
}
.form-toolbar {
    height: 12px;
    border-bottom: 1px solid #b4b4b4;
}
.form-toolbar::before {
    content: "";
    display: block;
    width: 2px;
    height: 2px;
    margin: 4px;
    background-color: #c4c4c4;
}
.form-canvas {
    flex: 1;
    background-image: conic-gradient(at 1px 1px, #f0f0f0 75%, #999 0);
    background-size: 10px 10px;
}
.form-status {
    display: flex;
    justify-content: flex-end;
    align-items: flex-end;
    height: 22px;
    padding: 2px 3px;
}
.form-status svg {
    width: 8px;
    height: 8px;
}

/* Right side */
.right-docks {
    display: flex;
    flex-direction: column;
    gap: 4px;
    min-height: 0;
    padding-top: 1px;
}
.dock {
    display: flex;
    flex-direction: column;
    min-height: 0;
}
.inspector {
    flex: 190 1 0;
}
.properties {
    flex: 483 1 0;
}
.resources {
    flex: 256 1 0;
    position: relative;
}
.table-frame {
    flex: 1;
    min-height: 0;
    display: flex;
    background-color: #fff;
    border: 1px solid #828790;
}
.table-view {
    flex: 1;
    padding-right: 1px;
    overflow: hidden;
}
.inspector .table-frame {
    margin-top: 2px;
}
table {
    width: 100%;
    table-layout: fixed;
    border-collapse: separate;
    border-spacing: 0;
}
th {
    height: 25px;
    padding: 0 4px;
    font-weight: normal;
    text-align: left;
    border-right: 1px solid #e5e5e5;
}
th:first-child {
    width: 149px;
}
td {
    height: 19px;
    padding: 0 0 0 3px;
    white-space: nowrap;
}
td svg {
    display: inline-block;
    vertical-align: middle;
}
.tree .alt {
    background-color: #f5f5f5;
}
.tree .tall td {
    height: 21px;
}
.tree .selected td {
    background-color: #d9d9d9;
}
.tree .selected .root {
    background-image: linear-gradient(#fff, #fff);
    background-size: 20px 100%;
    background-repeat: no-repeat;
}
.arrow {
    width: 9px;
    height: 9px;
    color: #444;
}
.tree .arrow {
    margin: 0 9px 0 2px;
}
.tree .child {
    padding-left: 43px;
}
.ico16 {
    width: 16px;
    height: 16px;
    margin-right: 6px;
    vertical-align: text-bottom;
}
.property-tools {
    display: flex;
    align-items: center;
    height: 36px;
    padding: 2px 4px 0 2px;
    gap: 4px;
}
.property-tools .filter {
    flex: 1;
}
.property-tools button {
    width: 27px;
}
.property-tools svg {
    width: 26px;
    height: 24px;
}
.class-name {
    height: 16px;
    margin-bottom: 1px;
    padding-left: 3px;
    line-height: 16px;
    border: 1px solid #b4b4b4;
    font-family: "Liberation Mono", monospace;
    font-size: 10px;
}
.props th {
    height: 26px;
}
.props th:first-child {
    width: 150px;
}
.props td {
    height: 21px;
    border-right: 1px solid #d4d4d4;
    border-bottom: 1px solid #d4d4d4;
}
.props .tall td {
    height: 22px;
}
.props td:last-child {
    border-right: none;
}
.props td:first-child {
    padding-left: 23px;
}
.props .arrow {
    margin: 0 9px 0 -18px;
    color: #999;
}
.props .group td {
    background-color: #a0a0a0;
    color: #fff;
    font-weight: bold;
}
.props .group .arrow {
    color: #333;
}
.props .changed td:first-child {
    font-weight: bold;
}
.peach {
    background-color: #ffefdf;
}
.light {
    background-color: #ffffdc;
}
.deep {
    background-color: #ffffbf;
}
.font-sample {
    display: inline-block;
    width: 22px;
    padding-left: 3px;
    font-family: "Liberation Serif", serif;
    font-size: 14px;
}
input[type="checkbox"] {
    appearance: none;
    display: grid;
    place-items: center;
    width: 13px;
    height: 13px;
    margin: 0;
    background-color: #fff;
    border: 1px solid #333;
}
input[type="checkbox"]:checked::before {
    content: "";
    width: 9px;
    height: 5px;
    margin-top: -3px;
    border-left: 1px solid #333;
    border-bottom: 1px solid #333;
    transform: rotate(-45deg);
}

/* Resource browser */
.resource-tools {
    display: flex;
    align-items: center;
    gap: 5px;
    height: 34px;
    padding: 2px 2px 0 4px;
}
.resource-tools svg {
    width: 24px;
    height: 24px;
}
.resource-tools .filter {
    width: 225px;
    margin-left: auto;
}
.resource-panes {
    flex: 1;
    display: grid;
    grid-template-columns: 1fr 1fr;
    gap: 5px;
}
.pane {
    padding: 2px 24px;
    background-color: #fff;
    border: 1px solid #828790;
}
.dock-tabs {
    display: flex;
    align-items: flex-start;
    height: 20px;
    padding-left: 2px;
}
.dock-tabs button {
    height: 18px;
    padding: 0 12px 0 9px;
    border: 1px solid #d9d9d9;
    border-top: none;
}
.dock-tabs .current {
    height: 20px;
    padding: 2px 12px 0;
    background-color: #fff;
}
.watermark {
    position: absolute;
    right: 89px;
    bottom: 26px;
    color: #b4b4b4;
    font-family: "Open Sans", "Noto Sans CJK SC", sans-serif;
    pointer-events: none;
}
.watermark p {
    font-size: 15px;
    line-height: 22px;
}
.watermark .big {
    font-size: 20px;
    line-height: 26px;
}

/* Taskbar */
.taskbar {
    flex: none;
    display: flex;
    height: 40px;
    background-image: linear-gradient(90deg, #203740, #22373f 60%, #1b2940 80%, #1a2440);
    color: #fff;
    font-family: "Open Sans", "Noto Sans CJK SC", sans-serif;
}
.task {
    width: 48px;
    height: 40px;
}
.task svg {
    width: 24px;
    height: 24px;
}
.task .start {
    width: 16px;
    height: 16px;
}
.task .badged {
    width: 26px;
    height: 26px;
}
.search {
    display: flex;
    align-items: center;
    gap: 12px;
    width: 344px;
    padding: 0 11px;
    background-color: #f2f2f2;
    border: 1px solid #bbb;
}
.search svg {
    width: 16px;
    height: 16px;
}
.search input {
    flex: 1;
    min-width: 0;
    padding: 2px 0 0;
    border: none;
    background: none;
    font: inherit;
    font-size: 14px;
}
.search input::placeholder {
    color: #2b2b2b;
}
.apps {
    display: flex;
    gap: 1px;
    margin-left: 3px;
}
.apps .open {
    background: linear-gradient(#76b9ed, #76b9ed) center bottom / 40px 2px no-repeat;
}
.apps .current {
    background: linear-gradient(#76b9ed, #76b9ed) center bottom / 48px 2px no-repeat #4d5d65;
}
.tray {
    display: flex;
    align-items: center;
    gap: 8px;
    margin-left: auto;
    margin-right: 4px;
    padding-right: 10px;
    border-right: 1px solid #5d6778;
}
.tray svg {
    width: 16px;
    height: 16px;
}
.ime {
    font-size: 15px;
}
.clock {
    display: flex;
    flex-direction: column;
    width: 64px;
    line-height: 19px;
    text-align: center;
}
.tray .notify {
    margin-left: 9px;
}
.tray .notify svg {
    width: 26px;
    height: 26px;
}
```
